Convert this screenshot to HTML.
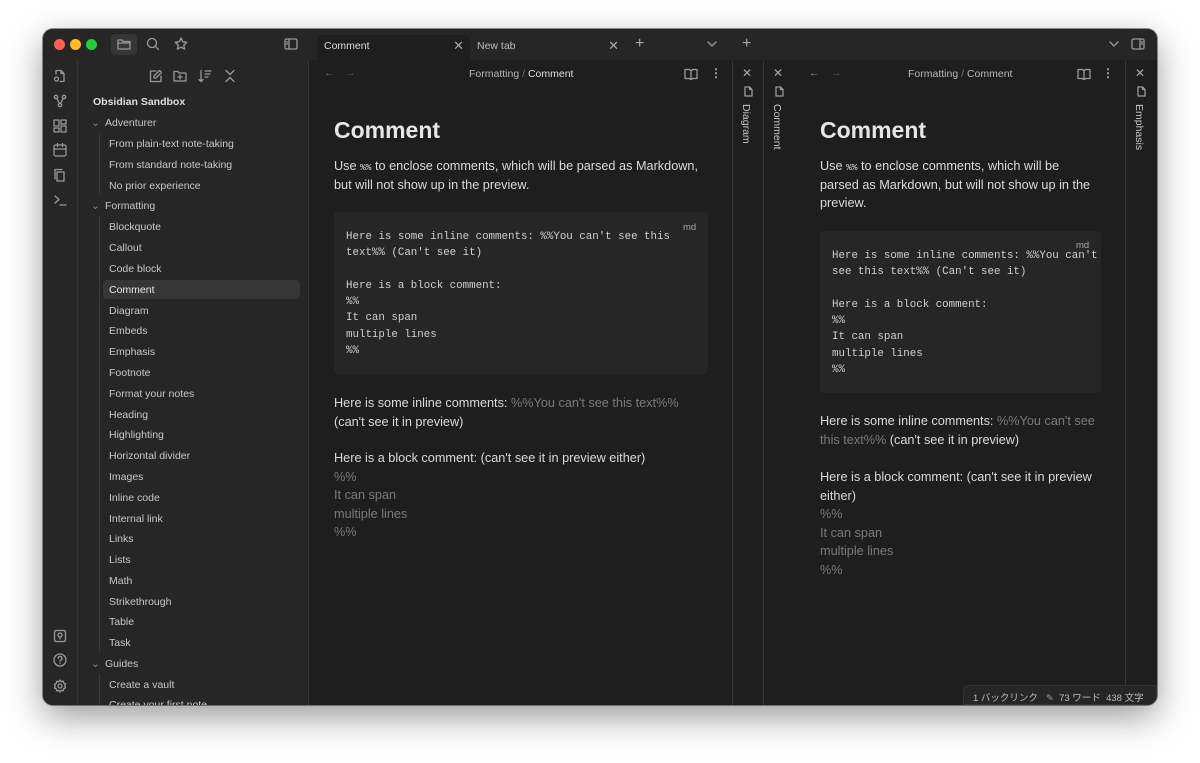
<!DOCTYPE html>
<html><head><meta charset="utf-8"><style>
*{margin:0;padding:0;box-sizing:border-box}
body{width:1200px;height:763px;background:#fff;position:relative;overflow:hidden;font-family:"Liberation Sans","Noto Sans CJK JP",sans-serif;color:#dadada}
.win{position:absolute;left:43px;top:29px;width:1114px;height:676px;border-radius:10px;overflow:hidden;background:#1e1e1e;box-shadow:0 12px 35px rgba(0,0,0,.4),0 0 0 1px rgba(0,0,0,.4)}
.a{position:absolute}
.title{left:0;top:0;width:1114px;height:31px;background:#262626}
.dot{width:11px;height:11px;border-radius:50%;top:10px}
.rib{left:0;top:31px;width:35px;height:645px;background:#262626;border-right:1px solid #333}
.side{left:35px;top:31px;width:231px;height:645px;background:#262626;border-right:1px solid #363636}
.it{position:absolute;font-size:10.5px;color:#c8c8c8;white-space:nowrap}
.tab{top:6px;height:25px;font-size:10.5px;padding:5px 7px;color:#dcdcdc}
.body{font-size:12.7px;line-height:18.5px;color:#dadada}
.cm{font-family:'Liberation Mono',monospace;font-size:9.5px;line-height:10px;vertical-align:baseline}
.mut{color:#7a7a7a}
.code{background:#262626;border-radius:4px;font-family:"Liberation Mono","DejaVu Sans Mono",monospace;font-size:10.8px;line-height:16.3px;color:#d0d0d0;white-space:pre}
h1{font-size:23px;font-weight:bold;color:#e6e6e6;position:absolute}
.vl{position:absolute;width:1px;background:#363636}
.ic{position:absolute;stroke:#9a9a9a;fill:none;stroke-width:1.3;stroke-linecap:round;stroke-linejoin:round}
.vt{position:absolute;writing-mode:vertical-rl;font-size:10.5px;color:#c8c8c8}
.nav{font-size:10.5px;color:#b8b8b8}
</style></head><body>
<div class="win">
 <div class="a title"></div>
 <div class="a dot" style="left:11px;background:#fe5f57"></div>
 <div class="a dot" style="left:27px;background:#febc2e"></div>
 <div class="a dot" style="left:43px;background:#28c840"></div>
 <div class="a" style="left:68px;top:5px;width:26px;height:21px;background:#363636;border-radius:4px"></div>
 <svg class="ic" style="left:74px;top:9px" width="14" height="12" viewBox="0 0 14 12"><path d="M1 2h4l1 1.5h7v7.5H1z M1 5h12"/></svg>
 <svg class="ic" style="left:103px;top:8px" width="14" height="14" viewBox="0 0 14 14"><circle cx="6" cy="6" r="4.5"/><path d="M9.5 9.5l3 3"/></svg>
 <svg class="ic" style="left:131px;top:8px" width="14" height="14" viewBox="0 0 14 14"><path d="M7 1l1.8 3.8 4 .5-3 2.8.8 4L7 10.2 3.4 12.1l.8-4-3-2.8 4-.5z"/></svg>
 <svg class="ic" style="left:241px;top:9px" width="14" height="12" viewBox="0 0 14 12"><rect x="1" y="1" width="12" height="10" rx="1.5"/><path d="M5 1v10M2.5 4h1M2.5 6h1"/></svg>
 <div class="a tab" style="left:274px;width:153px;background:#1e1e1e;border-radius:6px 6px 0 0">Comment<span style="position:absolute;right:6px;top:3px;font-size:13px;color:#aaa">✕</span></div>
 <div class="a tab" style="left:427px;width:155px;color:#bbb">New tab<span style="position:absolute;right:6px;top:3px;font-size:13px;color:#aaa">✕</span></div>
 <div class="a" style="left:592px;top:6px;font-size:16px;color:#aaa">+</div>
 <svg class="ic" style="left:664px;top:11px" width="10" height="8" viewBox="0 0 10 8"><path d="M1 2l4 4 4-4"/></svg>
 <div class="a" style="left:699px;top:6px;font-size:16px;color:#aaa">+</div>
 <svg class="ic" style="left:1066px;top:11px" width="10" height="8" viewBox="0 0 10 8"><path d="M1 2l4 4 4-4"/></svg>
 <svg class="ic" style="left:1088px;top:9px" width="14" height="12" viewBox="0 0 14 12"><rect x="1" y="1" width="12" height="10" rx="1.5"/><path d="M9 1v10M10.5 4h1M10.5 6h1"/></svg>

 <div class="a rib"></div>
 <svg class="ic" style="left:10px;top:40px" width="14" height="14" viewBox="0 0 14 14"><path d="M3 5V1.5h5l3 3V12.5H7M8 1.5v3h3"/><circle cx="3.5" cy="10" r="2"/></svg>
 <svg class="ic" style="left:10px;top:65px" width="14" height="14" viewBox="0 0 14 14"><circle cx="3" cy="3" r="1.7"/><circle cx="11" cy="3" r="1.7"/><circle cx="7" cy="11" r="1.7"/><path d="M4 4.5l2.3 5M10 4.5l-2.3 5"/></svg>
 <svg class="ic" style="left:10px;top:90px" width="14" height="14" viewBox="0 0 14 14"><rect x="1" y="1" width="5" height="6"/><rect x="8" y="1" width="5" height="4"/><rect x="1" y="9" width="5" height="4"/><rect x="8" y="7" width="5" height="6"/></svg>
 <svg class="ic" style="left:10px;top:114px" width="14" height="14" viewBox="0 0 14 14"><rect x="1" y="2" width="12" height="11" rx="1.5"/><path d="M1 6h12M4.5 0.5v3M9.5 0.5v3"/></svg>
 <svg class="ic" style="left:10px;top:139px" width="14" height="14" viewBox="0 0 14 14"><path d="M4 4h7v9H4zM2 11V1.5h7"/></svg>
 <svg class="ic" style="left:10px;top:164px" width="14" height="14" viewBox="0 0 14 14"><path d="M2 3l4 3.5-4 3.5M7 12h6"/></svg>
 <svg class="ic" style="left:10px;top:600px" width="14" height="14" viewBox="0 0 14 14"><rect x="1.5" y="1.5" width="11" height="11" rx="1.5"/><circle cx="7" cy="6" r="2"/><path d="M7 8v2"/></svg>
 <svg class="ic" style="left:10px;top:624px" width="14" height="14" viewBox="0 0 14 14"><circle cx="7" cy="7" r="6"/><path d="M5.2 5.3a1.9 1.9 0 1 1 2.5 1.8c-.5.2-.7.6-.7 1.1M7 10.3v.1"/></svg>
 <svg class="ic" style="left:10px;top:650px" width="14" height="14" viewBox="0 0 14 14"><circle cx="7" cy="7" r="2"/><path d="M7 1l1.3 1.6 2-.5.4 2 1.9.9-.9 1.9.9 1.9-1.9.9-.4 2-2-.5L7 13l-1.3-1.6-2 .5-.4-2-1.9-.9.9-1.9-.9-1.9 1.9-.9.4-2 2 .5z"/></svg>

 <div class="a side"></div>
 <svg class="ic" style="left:106px;top:40px" width="14" height="14" viewBox="0 0 14 14"><path d="M12 7v5.5H1.5V2H7M10.5 1.5l2 2L7 9H5V7z"/></svg>
 <svg class="ic" style="left:130px;top:40px" width="14" height="14" viewBox="0 0 14 14"><path d="M1 2.5h4l1 1.5h7v8H1zM7 6v4M5 8h4"/></svg>
 <svg class="ic" style="left:155px;top:40px" width="14" height="14" viewBox="0 0 14 14"><path d="M3 1.5v11M1 10.5l2 2 2-2M7 2h6M7 5h5M7 8h3"/></svg>
 <svg class="ic" style="left:180px;top:40px" width="14" height="14" viewBox="0 0 14 14"><path d="M3 1.5l4 4 4-4M3 12.5l4-4 4 4"/></svg>
 <div class="it" style="left:50px;top:67px;font-weight:bold;color:#dedede">Obsidian Sandbox</div>
 <div class="a" style="left:60px;top:251px;width:197px;height:19px;background:#363636;border-radius:4px"></div>
 <div class="vl" style="left:56px;top:104px;height:62px;background:#3a3a3a"></div>
 <div class="vl" style="left:56px;top:187px;height:437px;background:#3a3a3a"></div>
 <div class="vl" style="left:56px;top:645px;height:31px;background:#3a3a3a"></div>
 <div class="it" style="left:48px;top:88px;color:#888">⌄</div><div class="it" style="left:62px;top:88px">Adventurer</div>
 <div class="it" style="left:66px;top:109px">From plain-text note-taking</div>
 <div class="it" style="left:66px;top:130px">From standard note-taking</div>
 <div class="it" style="left:66px;top:151px">No prior experience</div>
 <div class="it" style="left:48px;top:171px;color:#888">⌄</div><div class="it" style="left:62px;top:171px">Formatting</div>
 <div class="it" style="left:66px;top:192px">Blockquote</div>
 <div class="it" style="left:66px;top:213px">Callout</div>
 <div class="it" style="left:66px;top:234px">Code block</div>
 <div class="it" style="left:66px;top:255px;color:#e8e8e8">Comment</div>
 <div class="it" style="left:66px;top:276px">Diagram</div>
 <div class="it" style="left:66px;top:296px">Embeds</div>
 <div class="it" style="left:66px;top:317px">Emphasis</div>
 <div class="it" style="left:66px;top:338px">Footnote</div>
 <div class="it" style="left:66px;top:359px">Format your notes</div>
 <div class="it" style="left:66px;top:380px">Heading</div>
 <div class="it" style="left:66px;top:400px">Highlighting</div>
 <div class="it" style="left:66px;top:421px">Horizontal divider</div>
 <div class="it" style="left:66px;top:442px">Images</div>
 <div class="it" style="left:66px;top:463px">Inline code</div>
 <div class="it" style="left:66px;top:484px">Internal link</div>
 <div class="it" style="left:66px;top:504px">Links</div>
 <div class="it" style="left:66px;top:525px">Lists</div>
 <div class="it" style="left:66px;top:546px">Math</div>
 <div class="it" style="left:66px;top:567px">Strikethrough</div>
 <div class="it" style="left:66px;top:587px">Table</div>
 <div class="it" style="left:66px;top:608px">Task</div>
 <div class="it" style="left:48px;top:629px;color:#888">⌄</div><div class="it" style="left:62px;top:629px">Guides</div>
 <div class="it" style="left:66px;top:650px">Create a vault</div>
 <div class="it" style="left:66px;top:670px">Create your first note</div>

 <!-- editor 1 -->
 <div class="a nav" style="left:281px;top:38px;color:#666">←</div><div class="a nav" style="left:302px;top:38px;color:#555">→</div>
 <div class="a nav" style="left:426px;top:39px">Formatting <span style="color:#777">/</span> <span style="color:#ddd">Comment</span></div>
 <svg class="ic" style="left:641px;top:39px" width="14" height="12" viewBox="0 0 14 12"><path d="M1 1.5h4.5L7 3l1.5-1.5H13v9H8.5L7 12 5.5 10.5H1zM7 3v9"/></svg>
 <div class="a" style="left:667px;top:37px;font-size:12px;color:#aaa;font-weight:bold">⋮</div>
 <h1 style="left:291px;top:88px">Comment</h1>
 <div class="a body" style="left:291px;top:128px;width:375px">Use <span class="cm">%%</span> to enclose comments, which will be parsed as Markdown, but will not show up in the preview.</div>
 <div class="a code" style="left:291px;top:183px;width:374px;height:162px;padding:17px 12px">Here is some inline comments: %%You can't see this
text%% (Can't see it)

Here is a block comment:
%%
It can span
multiple lines
%%</div>
 <div class="a" style="left:640px;top:193px;font-size:9.5px;color:#aaa">md</div>
 <div class="a body" style="left:291px;top:365px;width:360px">Here is some inline comments: <span class="mut">%%You can't see this text%%</span> (can't see it in preview)</div>
 <div class="a body" style="left:291px;top:420px;width:380px">Here is a block comment: (can't see it in preview either)<br><span class="mut">%%<br>It can span<br>multiple lines<br>%%</span></div>

 <div class="vl" style="left:689px;top:31px;height:645px"></div>
 <div class="a" style="left:699px;top:37px;font-size:12px;color:#aaa">✕</div>
 <svg class="ic" style="left:701px;top:57px" width="9" height="11" viewBox="0 0 9 11"><path d="M1 1h4.5L8 3.5V10H1zM5.5 1v2.5H8"/></svg>
 <div class="vt" style="left:697px;top:75px">Diagram</div>
 <div class="vl" style="left:720px;top:31px;height:645px"></div>
 <div class="a" style="left:730px;top:37px;font-size:12px;color:#aaa">✕</div>
 <svg class="ic" style="left:732px;top:57px" width="9" height="11" viewBox="0 0 9 11"><path d="M1 1h4.5L8 3.5V10H1zM5.5 1v2.5H8"/></svg>
 <div class="vt" style="left:728px;top:75px">Comment</div>

 <!-- editor 2 -->
 <div class="a nav" style="left:766px;top:38px;color:#888">←</div><div class="a nav" style="left:788px;top:38px;color:#555">→</div>
 <div class="a nav" style="left:865px;top:39px">Formatting <span style="color:#777">/</span> Comment</div>
 <svg class="ic" style="left:1034px;top:39px" width="14" height="12" viewBox="0 0 14 12"><path d="M1 1.5h4.5L7 3l1.5-1.5H13v9H8.5L7 12 5.5 10.5H1zM7 3v9"/></svg>
 <div class="a" style="left:1059px;top:37px;font-size:12px;color:#aaa;font-weight:bold">⋮</div>
 <h1 style="left:777px;top:88px">Comment</h1>
 <div class="a body" style="left:777px;top:128px;width:278px">Use <span class="cm">%%</span> to enclose comments, which will be parsed as Markdown, but will not show up in the preview.</div>
 <div class="a code" style="left:777px;top:202px;width:281px;height:162px;padding:17px 12px;overflow:hidden">Here is some inline comments: %%You can't
see this text%% (Can't see it)

Here is a block comment:
%%
It can span
multiple lines
%%</div>
 <div class="a" style="left:1033px;top:211px;font-size:9.5px;color:#aaa">md</div>
 <div class="a body" style="left:777px;top:383px;width:285px">Here is some inline comments: <span class="mut">%%You can't see this text%%</span> (can't see it in preview)</div>
 <div class="a body" style="left:777px;top:439px;width:285px">Here is a block comment: (can't see it in preview either)<br><span class="mut">%%<br>It can span<br>multiple lines<br>%%</span></div>

 <div class="vl" style="left:1082px;top:31px;height:645px"></div>
 <div class="a" style="left:1092px;top:37px;font-size:12px;color:#aaa">✕</div>
 <svg class="ic" style="left:1094px;top:57px" width="9" height="11" viewBox="0 0 9 11"><path d="M1 1h4.5L8 3.5V10H1zM5.5 1v2.5H8"/></svg>
 <div class="vt" style="left:1090px;top:75px">Emphasis</div>

 <div class="a" style="left:920px;top:656px;width:194px;height:20px;background:#262626;border-top-left-radius:6px;border:1px solid #333;font-size:9.5px;color:#bbb;padding:4px 0 0 9px;white-space:nowrap">1 バックリンク &nbsp; <span style="color:#999">✎</span> &nbsp;73 ワード &nbsp;438 文字</div>
</div>
</body></html>
